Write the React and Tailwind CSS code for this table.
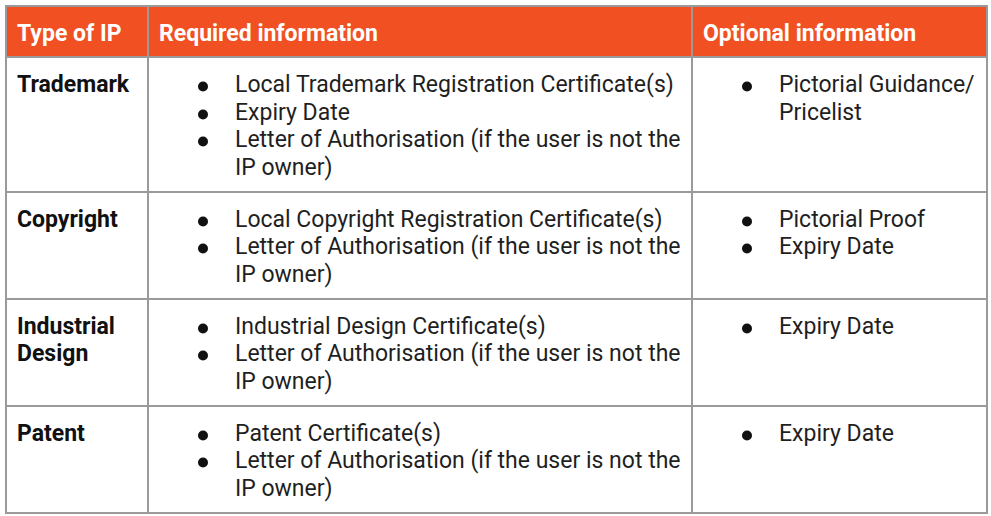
import React from "react";

const rows = [
  {
    type: ["Trademark"],
    req: [
      ["Local Trademark Registration Certificate(s)"],
      ["Expiry Date"],
      ["Letter of Authorisation (if the user is not the", "IP owner)"],
    ],
    opt: [["Pictorial Guidance/", "Pricelist"]],
  },
  {
    type: ["Copyright"],
    req: [
      ["Local Copyright Registration Certificate(s)"],
      ["Letter of Authorisation (if the user is not the", "IP owner)"],
    ],
    opt: [["Pictorial Proof"], ["Expiry Date"]],
  },
  {
    type: ["Industrial", "Design"],
    req: [
      ["Industrial Design Certificate(s)"],
      ["Letter of Authorisation (if the user is not the", "IP owner)"],
    ],
    opt: [["Expiry Date"]],
  },
  {
    type: ["Patent"],
    req: [
      ["Patent Certificate(s)"],
      ["Letter of Authorisation (if the user is not the", "IP owner)"],
    ],
    opt: [["Expiry Date"]],
  },
];

function List({ items }) {
  return (
    <div className="flex flex-col">
      {items.map((lines, i) => (
        <div key={i} className="flex items-start pl-[49px]">
          <div className="h-[27.67px] flex items-center shrink-0">
            <span className="block w-[10px] h-[10px] rounded-full bg-[#111] translate-y-[1.5px]" />
          </div>
          <div className="ml-[27px] flex flex-col">
            {lines.map((l, j) => (
              <span key={j} className="block whitespace-nowrap">{l}</span>
            ))}
          </div>
        </div>
      ))}
    </div>
  );
}

export default function App() {
  return (
    <div className="w-[991px] h-[516px] bg-white pt-[5px] pl-[5px]" style={{ fontFamily: "Roboto, 'Liberation Sans', sans-serif" }}>
      <table className="border-collapse table-fixed text-[23px] leading-[27.67px] text-[#1f1f1f]" style={{ width: 981 }}>
        <colgroup>
          <col style={{ width: 142 }} />
          <col style={{ width: 544 }} />
          <col style={{ width: 295 }} />
        </colgroup>
        <thead>
          <tr className="bg-[#f05022] text-white font-bold h-[51px]">
            <th className="border-2 border-[#9a9a9a] text-left align-middle px-[10px] pt-[4px] pb-0 font-bold">Type of IP</th>
            <th className="border-2 border-[#9a9a9a] text-left align-middle px-[10px] pt-[4px] pb-0 font-bold">Required information</th>
            <th className="border-2 border-[#9a9a9a] text-left align-middle px-[10px] pt-[4px] pb-0 font-bold">Optional information</th>
          </tr>
        </thead>
        <tbody>
          {rows.map((r, i) => (
            <tr key={i}>
              <td className="border-2 border-[#9a9a9a] align-top px-[10px] pt-[13px] pb-[9px] font-bold text-[#111]">
                {r.type.map((t, j) => (
                  <span key={j} className="block">{t}</span>
                ))}
              </td>
              <td className="border-2 border-[#9a9a9a] align-top pt-[13px] pb-[9px]">
                <List items={r.req} />
              </td>
              <td className="border-2 border-[#9a9a9a] align-top pt-[13px] pb-[9px]">
                <List items={r.opt} />
              </td>
            </tr>
          ))}
        </tbody>
      </table>
    </div>
  );
}
